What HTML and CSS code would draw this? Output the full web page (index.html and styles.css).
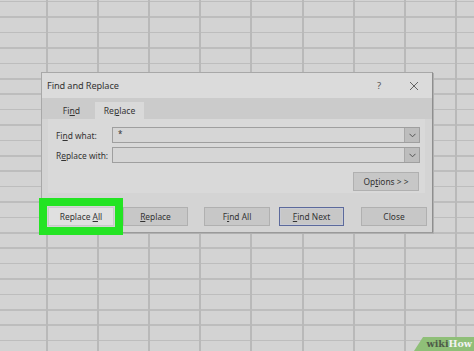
FILE: index.html
```html
<!DOCTYPE html>
<html>
<head>
<meta charset="utf-8">
<link rel="stylesheet" href="styles.css">
</head>
<body>
<div class="sheet">
  <div class="dialog">
    <div class="titlebar">
      <span class="title">Find and Replace</span>
      <span class="help">?</span>
      <svg class="close-x" width="10" height="10" viewBox="0 0 10 10"><path d="M1 1L9 9M9 1L1 9" stroke="#555" stroke-width="0.9" fill="none"/></svg>
    </div>
    <div class="tabs">
      <span class="tab">Fi<u>n</u>d</span>
      <span class="tab active">Re<u>p</u>lace</span>
    </div>
    <div class="panel">
      <div class="row">
        <span class="label">Fi<u>n</u>d what:</span>
        <div class="field"><span class="val">*</span><span class="drop"><svg width="7" height="5" viewBox="0 0 7 5"><path d="M0.5 0.8L3.5 3.8L6.5 0.8" stroke="#555" stroke-width="1" fill="none"/></svg></span></div>
      </div>
      <div class="row">
        <span class="label">R<u>e</u>place with:</span>
        <div class="field"><span class="val"></span><span class="drop"><svg width="7" height="5" viewBox="0 0 7 5"><path d="M0.5 0.8L3.5 3.8L6.5 0.8" stroke="#555" stroke-width="1" fill="none"/></svg></span></div>
      </div>
      <div class="opts-row">
        <button class="btn opts">Op<u>t</u>ions &gt; &gt;</button>
      </div>
    </div>
    <div class="buttons">
      <button class="btn hl">Replace <u>A</u>ll</button>
      <button class="btn narrow"><u>R</u>eplace</button>
      <button class="btn gap">F<u>i</u>nd All</button>
      <button class="btn def narrow"><u>F</u>ind Next</button>
      <button class="btn gap2">Close</button>
    </div>
  </div>
  <div class="wikihow"><span class="wk">wiki</span><span class="hw">How</span></div>
</div>
</body>
</html>
```

FILE: styles.css
```css
html, body {
  margin: 0;
  padding: 0;
}
body {
  width: 474px;
  height: 351px;
  overflow: hidden;
  font-family: "Noto Sans", "Open Sans", sans-serif;
}
.sheet {
  position: relative;
  width: 474px;
  height: 351px;
  background-color: #d3d3d3;
  background-image:
    repeating-linear-gradient(to right, transparent 0 46px, #b9b9b9 46px 48px, transparent 48px 51.1px),
    repeating-linear-gradient(to bottom, #bdbdbd 0 1.5px, transparent 1.5px 15.4px);
  background-position: 0 0, 0 1px;
}
.dialog {
  position: absolute;
  left: 41px;
  top: 72px;
  width: 390px;
  height: 159px;
  background: #d4d4d4;
  border: 1px solid #a8a8a8;
  border-right-color: #8e8e8e;
  border-bottom-color: #9a9a9a;
  box-shadow: 1px 1px 0 #b0b0b0;
  display: flex;
  flex-direction: column;
}
.titlebar {
  height: 25px;
  background: #dbdbdb;
  display: flex;
  align-items: center;
  padding-left: 5px;
  padding-right: 13px;
  color: #333;
}
.title {
  font-size: 9.2px;
  flex: 1;
  letter-spacing: -0.1px;
}
.help {
  font-size: 9.5px;
  color: #555;
  margin-right: 28px;
}
.close-x {
  display: block;
}
.tabs {
  height: 21px;
  background: #cbcbcb;
  display: flex;
  align-items: flex-end;
  padding-left: 6px;
}
.tab {
  font-size: 8.6px;
  color: #333;
  height: 17px;
  width: 47px;
  display: flex;
  align-items: center;
  justify-content: center;
}
.tab.active {
  width: 49px;
  background: #d9d9d9;
}
.panel {
  margin-left: 6px;
  width: 377px;
  height: 74px;
  background: #d9d9d9;
  box-sizing: border-box;
  padding: 8px 0 0 8px;
  display: flex;
  flex-direction: column;
}
.row {
  display: flex;
  align-items: center;
  height: 16px;
  margin-bottom: 4px;
}
.label {
  width: 56px;
  font-size: 8.4px;
  color: #333;
}
.field {
  width: 308px;
  height: 16px;
  box-sizing: border-box;
  border: 1px solid #9f9f9f;
  background: #d6d6d6;
  display: flex;
  align-items: stretch;
}
.val {
  flex: 1;
  font-size: 8px;
  color: #333;
  padding-left: 5px;
  line-height: 12px;
}
.drop {
  width: 14px;
  background: #bdbdbd;
  border-left: 1px solid #a8a8a8;
  display: flex;
  align-items: center;
  justify-content: center;
}
.drop svg {
  display: block;
}
.opts-row {
  display: flex;
  justify-content: flex-end;
  padding-right: 6px;
  margin-top: 5px;
}
.btn {
  font-family: "Noto Sans", "Open Sans", sans-serif;
  font-size: 8.4px;
  color: #333;
  width: 66px;
  height: 19px;
  padding: 0;
  margin: 0;
  background: #c7c7c7;
  border: 1px solid #b0b0b0;
  box-sizing: border-box;
  flex-shrink: 0;
}
.btn.narrow {
  width: 65px;
}
.buttons {
  display: flex;
  padding-left: 6px;
  margin-top: 14px;
}
.buttons .btn {
  margin-right: 9px;
}
.buttons .btn.gap {
  margin-left: 7px;
}
.buttons .btn.gap2 {
  margin-left: 8px;
}
.btn.hl {
  background: #e0e0e0;
  border-color: #c9c9c9;
  outline: 8px solid #23e423;
  outline-offset: 1px;
}
.btn.def {
  border: 1px solid #5c6a9c;
  box-shadow: inset 0 0 0 1px #c9cbd3;
}
u {
  text-decoration-thickness: 0.6px;
  text-underline-offset: 1px;
}
.wikihow {
  position: absolute;
  right: 0;
  bottom: 0;
  width: 58px;
  height: 14px;
  background: #8fbf78;
  clip-path: polygon(9px 0, 100% 0, 100% 100%, 0 100%);
  display: flex;
  align-items: center;
  justify-content: flex-end;
  padding-right: 2px;
  font-family: "DejaVu Serif", "Liberation Serif", serif;
  font-weight: bold;
  font-size: 9.5px;
  line-height: 14px;
}
.wk {
  color: #4d5b48;
}
.hw {
  color: #f2f2f2;
}
```
